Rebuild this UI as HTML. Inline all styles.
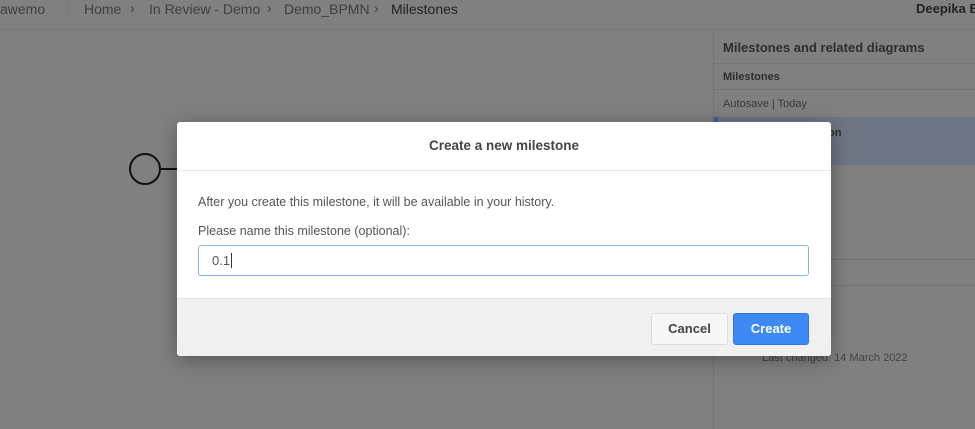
<!DOCTYPE html>
<html><head><style>
*{margin:0;padding:0;box-sizing:border-box}
html,body{background:#808080}
body{width:975px;height:429px;overflow:hidden;font-family:"Liberation Sans",sans-serif;position:relative;color:#333}
.hdr{position:absolute;left:0;top:0;width:975px;height:30px;font-size:14px;color:#3f3f3f;white-space:nowrap}
.hdr span{position:absolute;top:1px}
.side{position:absolute;left:713px;top:30px;width:262px;height:399px}
.side .t{position:absolute;left:10px;font-size:12px;color:#2e2e2e;white-space:nowrap}
.modal{position:absolute;left:177px;top:122px;width:654px;height:234px;background:#fff;border-radius:3px;box-shadow:0 4px 20px rgba(0,0,0,.35);overflow:hidden}
.mh{height:49px;border-bottom:1px solid #e5e5e5;text-align:center;line-height:48px;font-weight:bold;font-size:13.5px;color:#444}
.mt{position:absolute;left:21px;font-size:12.5px;color:#555}
.inp{position:absolute;left:21px;top:123px;width:611px;height:31px;border:1px solid #8ab0ee;border-radius:3px;font-size:13px;color:#555;padding:7px 13px}
.mf{position:absolute;left:0;top:176px;width:654px;height:58px;background:#f0f0f0;border-top:1px solid #e5e5e5}
.btn{position:absolute;top:14px;height:32px;border-radius:3px;font-weight:bold;font-size:13px;text-align:center;line-height:30px}
</style></head><body>
<svg style="position:absolute;left:0;top:0" width="975" height="429">
<rect x="0" y="0" width="975" height="429" fill="#808080"/>
<rect x="0" y="29" width="975" height="1" fill="#787878"/>
<rect x="67" y="0" width="1" height="17" fill="#777"/>
<rect x="713" y="30" width="1" height="399" fill="#747474"/>
<rect x="714" y="63" width="261" height="1" fill="#747474"/>
<rect x="714" y="89" width="261" height="1" fill="#747474"/>
<rect x="714" y="117" width="261" height="48" fill="#6e7584"/>
<rect x="714" y="117" width="4" height="48" fill="#3a5fa8"/>
<rect x="714" y="259" width="261" height="1" fill="#747474"/>
<rect x="714" y="285" width="261" height="1" fill="#747474"/>
<circle cx="145" cy="169" r="15" fill="none" stroke="#111" stroke-width="2"/>
<line x1="160" y1="169" x2="190" y2="169" stroke="#111" stroke-width="2"/>
</svg>
<div class="hdr">
<span style="left:0">awemo</span>
<span style="left:84px">Home</span><span style="left:130px;top:0">›</span>
<span style="left:149px">In Review - Demo</span><span style="left:267px;top:0">›</span>
<span style="left:284px">Demo_BPMN</span><span style="left:374px;top:0">›</span>
<span style="left:391px;color:#222">Milestones</span>
<span style="left:916px;color:#222;font-weight:bold;font-size:13px">Deepika Be</span>
</div>
<div class="side">
<div class="t" style="top:10px;font-weight:bold;font-size:13px">Milestones and related diagrams</div>
<div class="t" style="top:41px;font-weight:bold;font-size:11px">Milestones</div>
<div class="t" style="top:68px;font-size:11px;color:#3a3a3a">Autosave | Today</div>
<div class="t" style="top:97px;font-weight:bold;font-size:11px;left:115px">on</div>
<div class="t" style="top:322px;left:49px;font-size:11px;color:#444">Last changed: 14 March 2022</div>
</div>
<div class="modal">
<div class="mh">Create a new milestone</div>
<div class="mt" style="top:73px">After you create this milestone, it will be available in your history.</div>
<div class="mt" style="top:102px">Please name this milestone (optional):</div>
<div class="inp">0.1<span style="border-left:1px solid #333;margin-left:1px"></span></div>
<div class="mf">
<div class="btn" style="left:474px;width:77px;background:#f7f7f7;border:1px solid #ddd;color:#444">Cancel</div>
<div class="btn" style="left:556px;width:76px;background:#3d89f5;color:#fff;border:1px solid #2f7ae6">Create</div>
</div>
</div>
</body></html>
